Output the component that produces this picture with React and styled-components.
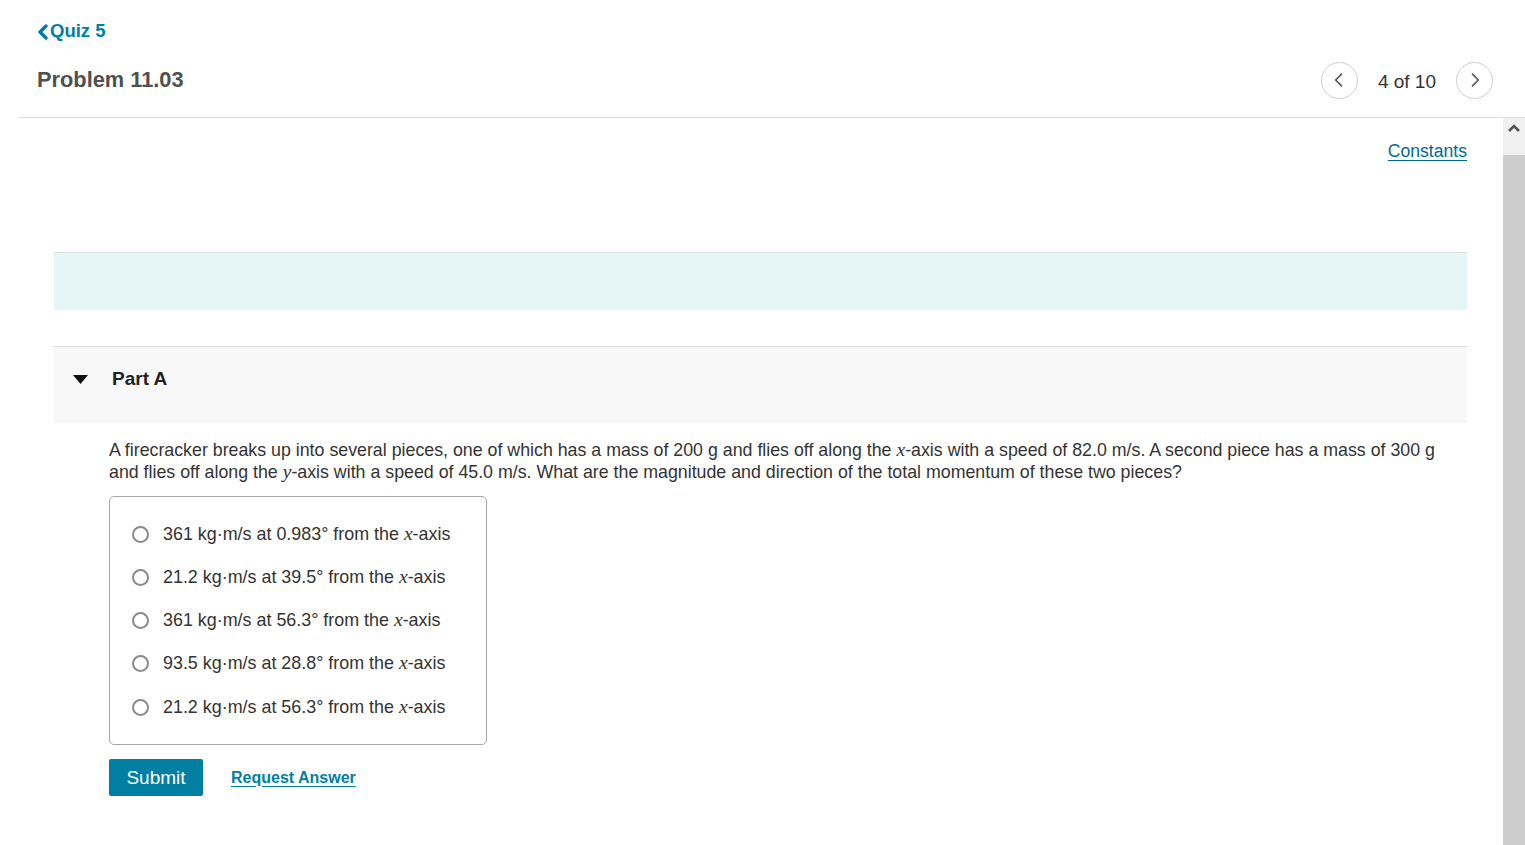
import React from "react";
import styled, { createGlobalStyle } from "styled-components";

const GlobalStyle = createGlobalStyle`
  html, body {
    margin: 0;
    padding: 0;
    height: 845px;
    overflow: hidden;
    background: #fff;
    font-family: "Liberation Sans", Arial, sans-serif;
    color: #333;
  }
`;

const Page = styled.div`
  display: flex;
  flex-direction: column;
  height: 845px;
`;

const Header = styled.header`
  margin-left: 19px;
  padding: 18px 32px 0 18px;
  border-bottom: 1px solid #dcdcdc;
  height: 118px;
  box-sizing: border-box;
  flex: none;
`;

const BackLink = styled.a`
  display: inline-flex;
  align-items: center;
  gap: 2px;
  color: #007fa3;
  font-weight: bold;
  font-size: 18.5px;
  text-decoration: none;
  height: 26px;
  svg {
    margin-top: 1px;
  }
`;

const TitleRow = styled.div`
  display: flex;
  align-items: center;
  justify-content: space-between;
  margin-top: 16px;
  height: 40px;
`;

const Title = styled.h1`
  margin: 0;
  font-size: 21.8px;
  font-weight: bold;
  color: #505050;
`;

const Pager = styled.div`
  display: flex;
  align-items: center;
  gap: 20px;
  font-size: 19px;
  color: #333;
  span {
    padding-top: 3px;
  }
`;

const CircleButton = styled.button`
  width: 37px;
  height: 37px;
  border-radius: 50%;
  border: 1px solid #cfcfcf;
  background: #fff;
  display: flex;
  align-items: center;
  justify-content: center;
  padding: 0;
  color: #555;
`;

const Body = styled.div`
  flex: 1;
  display: flex;
  min-height: 0;
`;

const Main = styled.main`
  flex: 1;
  padding: 0 36px 0 54px;
`;

const Scrollbar = styled.div`
  width: 22px;
  display: flex;
  flex-direction: column;
  background: #cdcdcd;
`;

const ScrollUp = styled.div`
  height: 37px;
  background: #f0f0f0;
  display: flex;
  justify-content: center;
  padding-top: 5px;
  box-sizing: border-box;
`;

const ConstantsRow = styled.div`
  display: flex;
  justify-content: flex-end;
  padding-top: 23px;
  height: 134px;
  box-sizing: border-box;
`;

const TextLink = styled.a`
  color: ${(p) => p.$color || "#006b8f"};
  font-size: ${(p) => p.$size || "17.6px"};
  font-weight: ${(p) => (p.$bold ? "bold" : "normal")};
  text-decoration: underline;
  text-underline-offset: 3px;
`;

const Band = styled.div`
  height: 57px;
  background: #e6f6f6;
  border-top: 1px solid #dcdcdc;
`;

const PartHeader = styled.div`
  margin-top: 36px;
  height: 77px;
  background: #f8f8f8;
  border-top: 1px solid #dcdcdc;
  display: flex;
  align-items: center;
  gap: 24px;
  padding: 0 0 12px 19px;
  font-size: 19px;
  line-height: 22px;
  font-weight: bold;
  color: #222;
  box-sizing: border-box;
`;

const PartBody = styled.div`
  padding: 16px 0 0 55px;
`;

const Question = styled.p`
  margin: 0;
  font-size: 17.8px;
  line-height: 22px;
  color: #333;
`;

const MathVar = styled.span`
  font-family: "Liberation Serif", "DejaVu Serif", serif;
  font-style: italic;
  font-size: 1.1em;
  line-height: 1;
`;

const Options = styled.div`
  margin-top: 13px;
  width: 378px;
  height: 249px;
  box-sizing: border-box;
  border: 1px solid #a8a8a8;
  border-radius: 5px;
  padding: 22px 0 0 22px;
  display: flex;
  flex-direction: column;
  gap: 13.3px;
`;

const Option = styled.label`
  display: flex;
  align-items: center;
  gap: 14px;
  height: 30px;
  font-size: 17.9px;
  color: #333;
`;

const Radio = styled.span`
  width: 13px;
  height: 13px;
  border-radius: 50%;
  border: 2px solid #8a8a8a;
  display: inline-block;
  flex: none;
`;

const Actions = styled.div`
  display: flex;
  align-items: center;
  gap: 28px;
  margin-top: 14px;
`;

const SubmitButton = styled.button`
  width: 94px;
  height: 37px;
  background: #007fa3;
  color: #fff;
  border: none;
  border-radius: 2px;
  font-family: "Liberation Sans", Arial, sans-serif;
  font-size: 19px;
`;

const options = [
  ["361", "0.983"],
  ["21.2", "39.5"],
  ["361", "56.3"],
  ["93.5", "28.8"],
  ["21.2", "56.3"],
];

const Chevron = ({ dir, size = 18, stroke = 2 }) => (
  <svg width={size} height={size} viewBox="0 0 24 24" fill="none" stroke="currentColor" strokeWidth={stroke} strokeLinecap="round" strokeLinejoin="round">
    {dir === "left" && <polyline points="15 5 8 12 15 19" />}
    {dir === "right" && <polyline points="9 5 16 12 9 19" />}
  </svg>
);

export default function App() {
  return (
    <Page>
      <GlobalStyle />
      <Header>
        <BackLink href="#">
          <svg width="11" height="16" viewBox="0 0 11 16">
            <polyline points="9,2 3,8 9,14" fill="none" stroke="currentColor" strokeWidth="3.4" strokeLinecap="round" strokeLinejoin="round" />
          </svg>
          Quiz 5
        </BackLink>
        <TitleRow>
          <Title>Problem 11.03</Title>
          <Pager>
            <CircleButton aria-label="previous">
              <Chevron dir="left" size={20} />
            </CircleButton>
            <span>4 of 10</span>
            <CircleButton aria-label="next">
              <Chevron dir="right" size={20} />
            </CircleButton>
          </Pager>
        </TitleRow>
      </Header>
      <Body>
        <Main>
          <ConstantsRow>
            <TextLink href="#">Constants</TextLink>
          </ConstantsRow>
          <Band />
          <PartHeader>
            <svg width="15" height="9" viewBox="0 0 15 9">
              <polygon points="0,0 15,0 7.5,9" fill="#111" />
            </svg>
            Part A
          </PartHeader>
          <PartBody>
            <Question>
              A firecracker breaks up into several pieces, one of which has a mass of 200 g and flies off along the{" "}
              <MathVar>x</MathVar>-axis with a speed of 82.0 m/s. A second piece has a mass of 300 g and flies off
              along the <MathVar>y</MathVar>-axis with a speed of 45.0 m/s. What are the magnitude and direction of the
              total momentum of these two pieces?
            </Question>
            <Options>
              {options.map(([mag, ang], i) => (
                <Option key={i}>
                  <Radio />
                  <span>
                    {mag} kg·m/s at {ang}° from the <MathVar>x</MathVar>-axis
                  </span>
                </Option>
              ))}
            </Options>
            <Actions>
              <SubmitButton>Submit</SubmitButton>
              <TextLink href="#" $bold $size="16px" $color="#007fa3">
                Request Answer
              </TextLink>
            </Actions>
          </PartBody>
        </Main>
        <Scrollbar>
          <ScrollUp>
            <svg width="14" height="10" viewBox="0 0 14 10">
              <polyline points="2,8 7,3 12,8" fill="none" stroke="#555" strokeWidth="2.6" />
            </svg>
          </ScrollUp>
        </Scrollbar>
      </Body>
    </Page>
  );
}
